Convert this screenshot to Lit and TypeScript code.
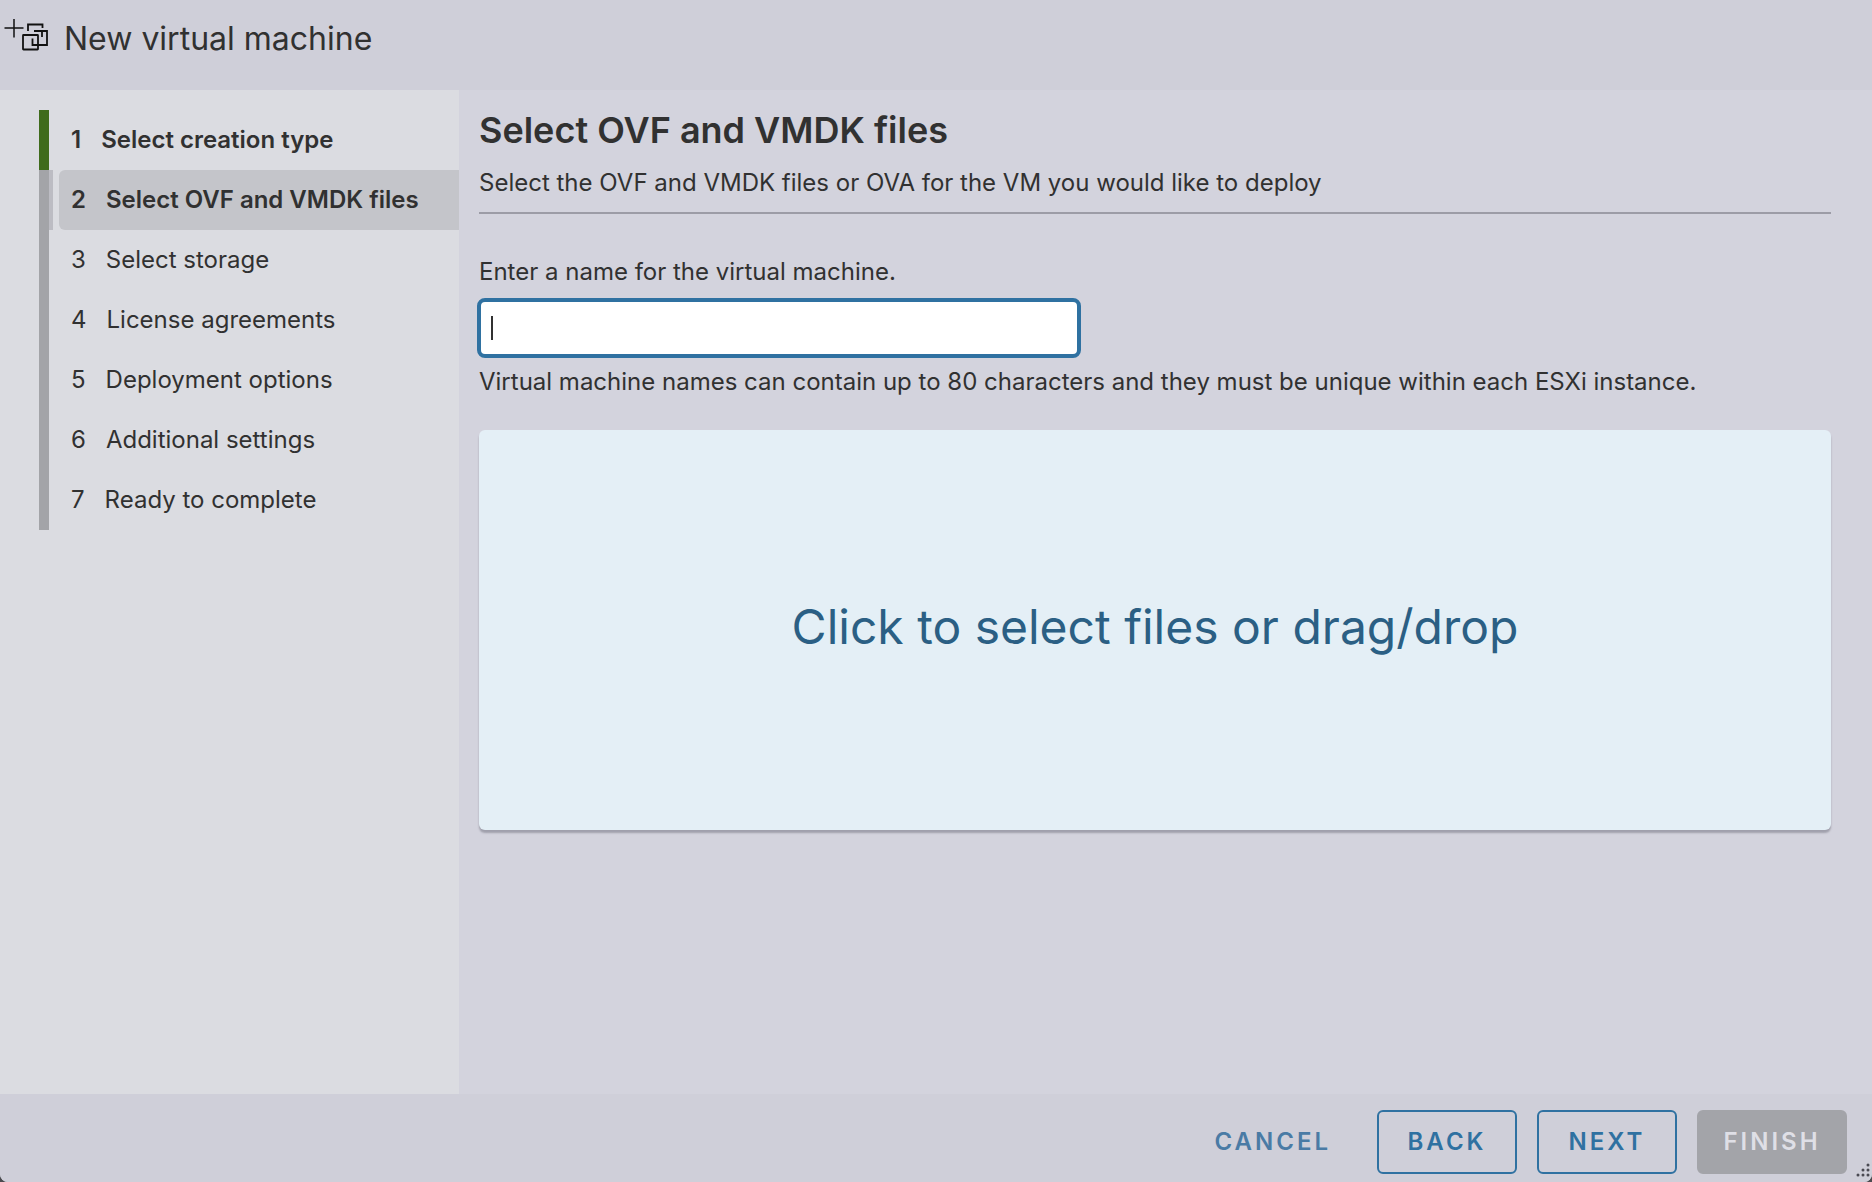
import { LitElement, html, css } from "lit";
import { customElement, state } from "lit/decorators.js";

interface Step {
  label: string;
  done?: boolean;
}

@customElement("app-root")
export class AppRoot extends LitElement {
  static styles = css`
    :host {
      display: block;
      min-height: 100vh;
      background: #4b4b4f;
      color: #313131;
      font-family: Inter, "Open Sans", sans-serif;
      font-size: 24px;
      line-height: 30px;
    }
    * {
      box-sizing: border-box;
    }
    .wizard {
      min-height: 100vh;
      display: grid;
      grid-template-rows: 90px 1fr 88px;
      background: #d3d3dd;
      border-radius: 0 0 8px 8px;
      overflow: hidden;
    }
    .header {
      display: flex;
      align-items: center;
      gap: 14px;
      padding: 0 0 12px 4px;
      background: #cfcfd9;
    }
    .header svg {
      width: 46px;
      height: 40px;
      flex: none;
    }
    .header h1 {
      margin: 0;
      font-size: 32px;
      line-height: 40px;
      font-weight: 400;
    }
    .body {
      display: grid;
      grid-template-columns: 459px 1fr;
    }
    .sidebar {
      background: #dbdce1;
      padding: 20px 0 0 39px;
    }
    .steps {
      list-style: none;
      margin: 0;
      padding: 0;
    }
    .step {
      display: flex;
      height: 60px;
      border-left: 10px solid #a3a4a8;
    }
    .step.done {
      border-left-color: #3f6b1b;
    }
    .step::before {
      content: "";
      width: 4px;
      margin-right: 6px;
    }
    .step.current::before {
      background: #bcbcc3;
    }
    .step button {
      flex: 1;
      display: flex;
      align-items: center;
      gap: 20px;
      padding: 0 0 1px 12px;
      border: 0;
      border-radius: 6px 0 0 6px;
      background: none;
      color: inherit;
      font: inherit;
      text-align: left;
      white-space: nowrap;
    }
    .step.done button,
    .step.current button {
      font-weight: 600;
    }
    .step.current button {
      background: #c4c5ca;
    }
    .content {
      padding: 20px 41px 20px 20px;
    }
    .content h2 {
      margin: 0;
      font-size: 36px;
      line-height: 40px;
      font-weight: 600;
    }
    .summary {
      margin: 0;
      padding: 18px 0 14px;
      border-bottom: 2px solid #9c9ca6;
    }
    .field {
      display: flex;
      flex-direction: column;
      align-items: flex-start;
      padding: 43px 0 33px;
    }
    .box {
      position: relative;
      width: 604px;
      max-width: 100%;
      margin: 11px 0 9px -2px;
    }
    .box input {
      display: block;
      width: 100%;
      height: 60px;
      padding: 0 10px;
      border: 4px solid #2f71a1;
      border-radius: 8px;
      background: #fff;
      color: inherit;
      font: inherit;
      outline: none;
      caret-color: transparent;
    }
    .caret {
      position: absolute;
      left: 14px;
      top: 18px;
      width: 2px;
      height: 24px;
      background: #313131;
    }
    .drop {
      display: block;
      width: 100%;
      height: 400px;
      padding: 0 0 6px;
      border: 0;
      border-radius: 6px;
      background: #e4eff6;
      box-shadow: 0 3px 2px #a0a0ac;
      color: #2b5f84;
      font: inherit;
      font-size: 48px;
      line-height: 56px;
    }
    .footer {
      display: flex;
      justify-content: flex-end;
      align-items: flex-start;
      gap: 20px;
      padding: 16px 25px 0 20px;
      background: #cfcfd9;
      position: relative;
    }
    .btn {
      min-width: 140px;
      height: 64px;
      padding: 0 24px;
      border: 2px solid #2f71a1;
      border-radius: 6px;
      background: none;
      color: #2f71a1;
      font: inherit;
      font-weight: 600;
      letter-spacing: 3px;
      text-transform: uppercase;
    }
    .btn.link {
      border-color: transparent;
      color: #4a7ba5;
    }
    .btn.primary {
      min-width: 150px;
      border-color: #a3a4a9;
      background: #a3a4a9;
      color: #dfdfe6;
    }
    .grip {
      position: absolute;
      right: 2px;
      bottom: 5px;
      width: 14px;
      height: 14px;
    }
  `;

  @state() private current = 1;

  private steps: Step[] = [
    { label: "Select creation type", done: true },
    { label: "Select OVF and VMDK files" },
    { label: "Select storage" },
    { label: "License agreements" },
    { label: "Deployment options" },
    { label: "Additional settings" },
    { label: "Ready to complete" },
  ];

  render() {
    return html`
      <div class="wizard">
        <header class="header">
          <svg viewBox="4 19 46 40" fill="none" stroke="#111" stroke-width="1.800" aria-hidden="true">
            <path d="M4.500 28H23.500M14 19V37.500" stroke-width="1.500" />
            <path d="M28 31V24.500H42.500V28" />
            <path d="M34 31H47V45H32.500V38.500M42 31V37" />
            <rect x="23" y="35" width="15" height="14.500" rx="0.500" />
          </svg>
          <h1>New virtual machine</h1>
        </header>
        <div class="body">
          <nav class="sidebar" aria-label="Steps">
            <ol class="steps">
              ${this.steps.map(
                (s, i) => html`<li class="step ${s.done ? "done" : ""} ${i === this.current ? "current" : ""}">
                  <button type="button"><span>${i + 1}</span><span>${s.label}</span></button>
                </li>`
              )}
            </ol>
          </nav>
          <main class="content">
            <h2>Select OVF and VMDK files</h2>
            <p class="summary">Select the OVF and VMDK files or OVA for the VM you would like to deploy</p>
            <div class="field">
              <label for="name">Enter a name for the virtual machine.</label>
              <div class="box">
                <input id="name" type="text" maxlength="80" aria-describedby="hint" />
                <span class="caret"></span>
              </div>
              <span id="hint">Virtual machine names can contain up to 80 characters and they must be unique within each ESXi instance.</span>
            </div>
            <button type="button" class="drop">Click to select files or drag/drop</button>
          </main>
        </div>
        <footer class="footer">
          <button type="button" class="btn link">Cancel</button>
          <button type="button" class="btn">Back</button>
          <button type="button" class="btn">Next</button>
          <button type="button" class="btn primary" disabled>Finish</button>
          <svg class="grip" viewBox="0 0 14 14" fill="#4a4a52" aria-hidden="true">
            <circle cx="12" cy="2" r="1.500" />
            <circle cx="7" cy="7" r="1.500" /><circle cx="12" cy="7" r="1.500" />
            <circle cx="2" cy="12" r="1.500" /><circle cx="7" cy="12" r="1.500" /><circle cx="12" cy="12" r="1.500" />
          </svg>
        </footer>
      </div>
    `;
  }
}
